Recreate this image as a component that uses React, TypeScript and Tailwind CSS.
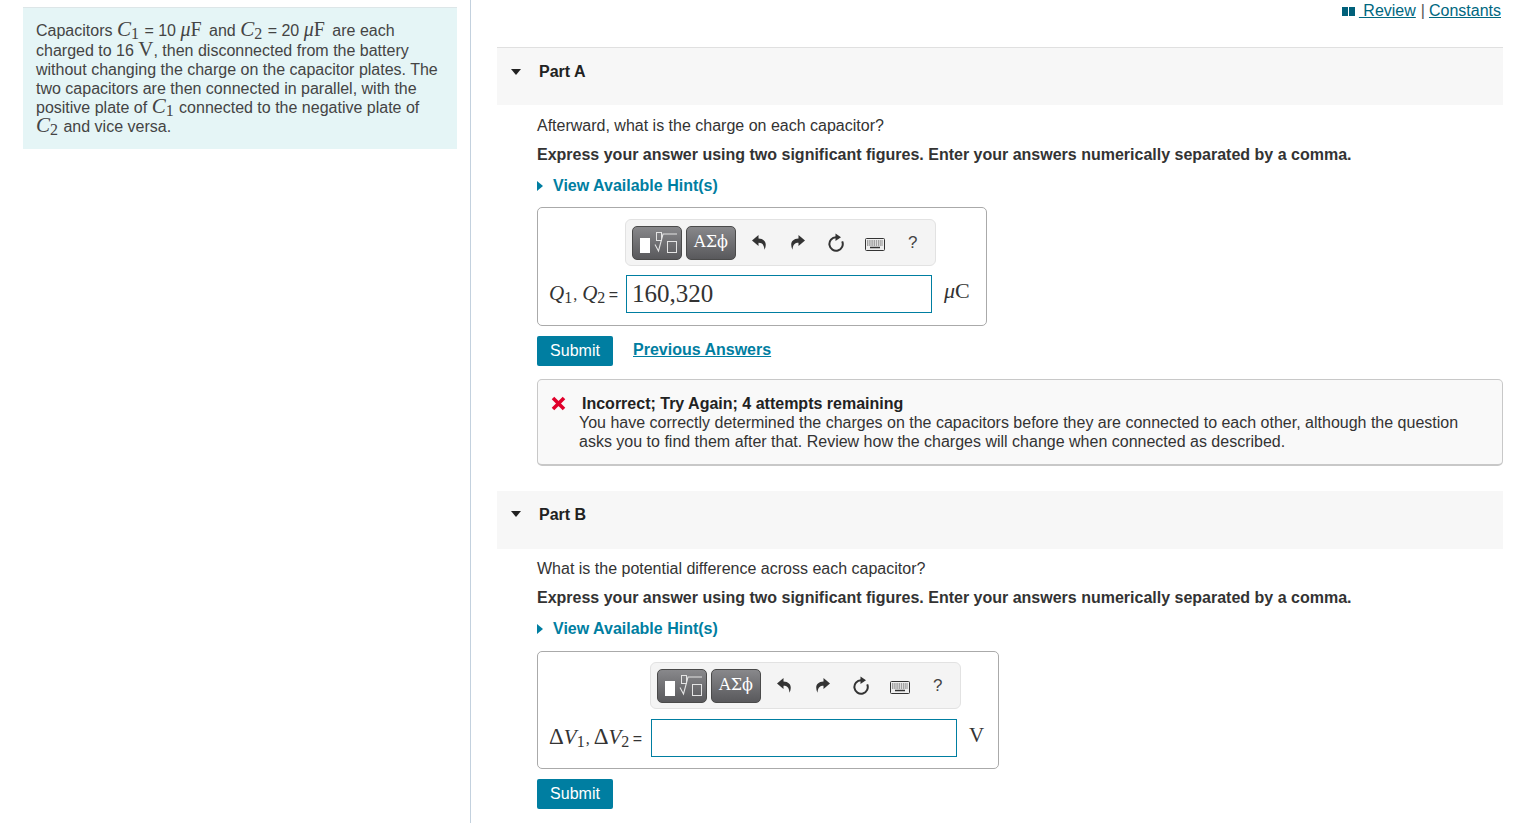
import { ReactNode } from 'react';

const Sym = ({ v, sub }: { v: string; sub?: string }) => (
  <span className="font-['Liberation_Serif',serif] text-[21px] leading-[0] mr-[1px]">
    <i>{v}</i>
    {sub && <span className="text-[16px] relative top-[3px]">{sub}</span>}
  </span>
);

const Micro = ({ unit }: { unit: string }) => (
  <span className="font-['Liberation_Serif',serif] text-[20px] leading-[0] mr-[3px]">
    <i>μ</i>{unit}
  </span>
);

const Toolbar = () => (
  <div className="w-[311px] h-[47px] rounded-[6px] border border-[#e2e2e2] bg-[#f4f4f4] flex items-center pl-[6px]">
    <button className="w-[50px] h-[34px] rounded-[5px] border border-[#4a4a4a] bg-linear-to-b from-[#88888b] to-[#59595c] flex items-center justify-center">
      <svg width="48" height="32" viewBox="0 0 48 32" fill="none">
        <rect x="7" y="11" width="10" height="15" fill="#fff" />
        <rect x="23.500" y="5.500" width="5" height="8" stroke="#e4e4e4" />
        <path d="M22 17.500l3.500 6.500 4.500-17h14" stroke="#e4e4e4" strokeWidth="1.100" />
        <rect x="34.500" y="14.500" width="9" height="11" stroke="#e4e4e4" />
      </svg>
    </button>
    <button className="ml-[4px] w-[50px] h-[34px] pb-[1px] rounded-[5px] border border-[#4a4a4a] bg-linear-to-b from-[#88888b] to-[#59595c] flex items-center justify-center text-white font-['DejaVu_Serif',serif] text-[16px] leading-none">
      ΑΣϕ
    </button>
    <div className="flex items-center text-[#333]">
      <svg className="ml-[16px]" width="15" height="15" viewBox="0 0 15 15" fill="#333">
        <path d="M6.500 0L0 5.600l6.500 5.400V7.800c3.500 0 5.500 1.500 6 7 2.800-6 1-11-6-11.300z" />
      </svg>
      <svg className="ml-[23px]" width="15" height="15" viewBox="0 0 15 15" fill="#333">
        <path d="M8.500 0L15 5.600 8.500 11V7.800c-3.500 0-5.500 1.500-6 7-2.800-6-1-11 6-11.300z" />
      </svg>
      <svg className="ml-[23px]" width="18" height="20" viewBox="0 0 18 20" fill="none">
        <path d="M14.200 8.300A6.700 6.700 0 1 1 8 4.300" stroke="#333" strokeWidth="2" />
        <path d="M7.500.500L13 4.300 7.500 8z" fill="#333" />
      </svg>
      <svg className="ml-[19px] mt-[3px]" width="20" height="13" viewBox="0 0 20 13">
        <rect x="0.500" y="0.500" width="19" height="12" rx="1" fill="#eee" stroke="#333" />
        <path d="M2 3h16M2 5h16M2 7h16" stroke="#555" strokeWidth="1" strokeDasharray="1.400 .8" />
        <path d="M5 9.500h10" stroke="#333" strokeWidth="1.500" />
      </svg>
      <span className="ml-[23px] text-[17px] leading-none text-[#444]">?</span>
    </div>
  </div>
);

const AnswerBox = ({ label, value, unit, boxCls, barCls, labelW }: { label: ReactNode; value?: string; unit: ReactNode; boxCls: string; barCls: string; labelW: string }) => (
  <div className={`${boxCls} rounded-[5px] border border-[#aaa]`}>
    <div className={barCls}>
      <Toolbar />
    </div>
    <div className="flex items-center pl-[11px]">
      <span className={`${labelW} whitespace-nowrap text-[#333] mr-[8px]`}>{label}</span>
      <div className="w-[306px] h-[38px] border border-[#007ea1] pl-[5px] pb-[2px] flex items-center font-['Liberation_Serif',serif] text-[25px] text-[#333]">{value}</div>
      <span className="ml-[12px] text-[#333] relative -top-[2px]">{unit}</span>
    </div>
  </div>
);

const PartHeader = ({ title, cls }: { title: string; cls: string }) => (
  <div className={`${cls} bg-[#f7f7f7] flex items-center pl-[14px]`}>
    <span className="w-0 h-0 border-x-[5.500px] border-x-transparent border-t-[6px] border-t-[#222]" />
    <span className="ml-[18px] font-bold text-[#222]">{title}</span>
  </div>
);

const Hint = () => (
  <div className="flex items-center mt-[12px] h-[19px]">
    <span className="w-0 h-0 border-y-[5px] border-y-transparent border-l-[6px] border-l-[#007ea1]" />
    <span className="ml-[10px] font-bold text-[#007ea1]">View Available Hint(s)</span>
  </div>
);

const Submit = () => (
  <button className="w-[76px] h-[30px] pb-[2px] rounded-[2px] bg-[#007ea1] text-white text-[16px]">Submit</button>
);

export default function App() {
  return (
    <div className="flex w-[1519px] h-[823px] overflow-hidden bg-white font-['Liberation_Sans',sans-serif] text-[16px] leading-[19px] text-[#333]">
      <aside className="w-[471px] shrink-0 border-r border-[#c3d1de] pl-[23px] pt-[7px]">
        <div className="w-[434px] h-[142px] bg-[#e5f5f6] border-t border-[#dde6e8] pl-[13px] pt-[13px] text-[#444]">
          <div className="h-[20px]">Capacitors <Sym v="C" sub="1" /> = 10 <Micro unit="F" /> and <Sym v="C" sub="2" /> = 20 <Micro unit="F" /> are each</div>
          <div className="h-[19px]">charged to 16 <span className="font-['Liberation_Serif',serif] text-[21px] leading-[0]">V</span>, then disconnected from the battery</div>
          <div className="h-[19px]">without changing the charge on the capacitor plates. The</div>
          <div className="h-[19px]">two capacitors are then connected in parallel, with the</div>
          <div className="h-[19px]">positive plate of <Sym v="C" sub="1" /> connected to the negative plate of</div>
          <div className="h-[19px]"><Sym v="C" sub="2" /> and vice versa.</div>
        </div>
      </aside>
      <main className="ml-[26px] w-[1006px]">
        <div className="h-[47px] flex justify-end pr-[2px] text-[#00677f] leading-[21px]">
          <span className="flex items-start">
            <svg className="mt-[7px] mr-[4px]" width="13" height="9" viewBox="0 0 13 9" fill="#00607a">
              <path d="M0 0h6v9H0zM7 0h6v9H7z" />
            </svg>
            <a className="underline whitespace-pre"> Review</a>
            <span className="ml-[5px] mr-[4px] text-[#555]">|</span>
            <a className="underline">Constants</a>
          </span>
        </div>
        <div className="border-t border-[#e0e0e0]">
          <PartHeader title="Part A" cls="h-[57px] pb-[10px]" />
        </div>
        <div className="pl-[40px]">
          <p className="mt-[11px]">Afterward, what is the charge on each capacitor?</p>
          <p className="mt-[10px] font-bold">Express your answer using two significant figures. Enter your answers numerically separated by a comma.</p>
          <Hint />
          <div className="mt-[12px]">
            <AnswerBox
              boxCls="w-[450px] h-[119px]"
              barCls="pl-[87px] pt-[11px] pb-[9px]"
              labelW="w-[69px]"
              value="160,320"
              label={<><Sym v="Q" sub="1" /><span className="inline-block w-[9px] font-['Liberation_Serif',serif]">,</span><Sym v="Q" sub="2" /><span className="-ml-[2px]"> =</span></>}
              unit={<span className="font-['Liberation_Serif',serif] text-[22px] leading-[0]"><i>μ</i>C</span>}
            />
          </div>
          <div className="flex items-center mt-[10px]">
            <Submit />
            <a className="ml-[20px] mb-[3px] font-bold text-[#007ea1] underline">Previous Answers</a>
          </div>
          <div className="mt-[13px] w-[966px] h-[87px] rounded-[5px] border border-[#c8c8c8] border-b-2 bg-[#f9f9f9] pl-[13px] pt-[14px] text-[#333]">
            <div className="flex items-center">
              <svg width="15" height="15" viewBox="0 0 15 15">
                <path d="M2 2l11 11M13 2L2 13" stroke="#e0002b" strokeWidth="3.600" />
              </svg>
              <span className="ml-[16px] font-bold text-[#222]">Incorrect; Try Again; 4 attempts remaining</span>
            </div>
            <p className="ml-[28px]">You have correctly determined the charges on the capacitors before they are connected to each other, although the question<br />asks you to find them after that. Review how the charges will change when connected as described.</p>
          </div>
        </div>
        <div className="mt-[25px]">
          <PartHeader title="Part B" cls="h-[58px] pb-[12px]" />
        </div>
        <div className="pl-[40px]">
          <p className="mt-[10px]">What is the potential difference across each capacitor?</p>
          <p className="mt-[10px] font-bold">Express your answer using two significant figures. Enter your answers numerically separated by a comma.</p>
          <Hint />
          <div className="mt-[13px]">
            <AnswerBox
              boxCls="w-[462px] h-[118px]"
              barCls="pl-[112px] pt-[10px] pb-[10px]"
              labelW="w-[94px]"
              label={<><span className="font-['Liberation_Serif',serif] text-[23px] leading-[0]">Δ</span><Sym v="V" sub="1" /><span className="inline-block w-[8px] font-['Liberation_Serif',serif]">,</span><span className="font-['Liberation_Serif',serif] text-[23px] leading-[0]">Δ</span><Sym v="V" sub="2" /><span className="-ml-[2px]"> =</span></>}
              unit={<span className="font-['Liberation_Serif',serif] text-[21px] leading-[0]">V</span>}
            />
          </div>
          <div className="mt-[10px]">
            <Submit />
          </div>
        </div>
      </main>
    </div>
  );
}
